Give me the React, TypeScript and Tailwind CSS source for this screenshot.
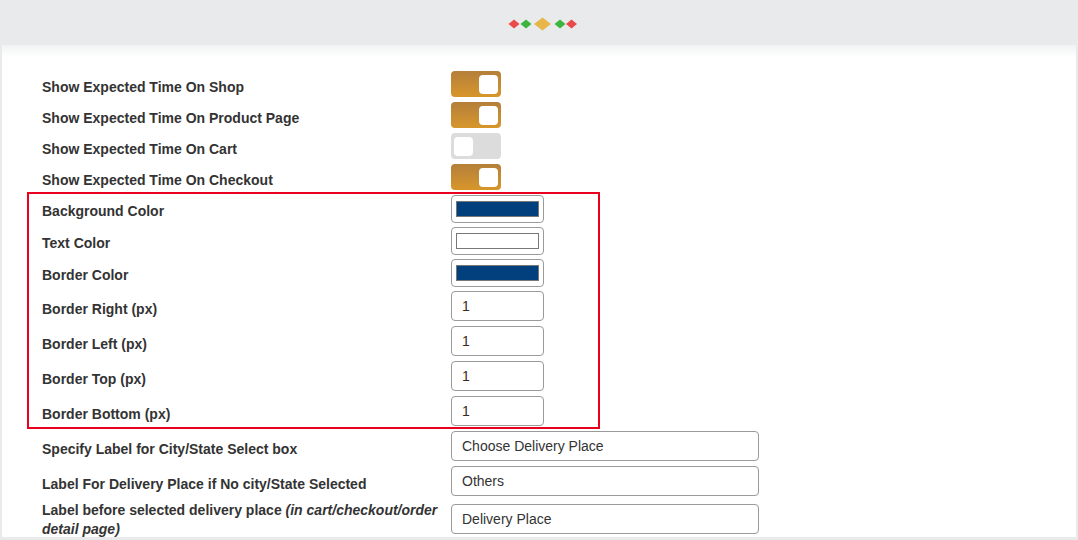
import React from "react";

const font = { fontFamily: '"Liberation Sans", Arial, sans-serif' };

function Star({ cx, cy, rx, ry, color }: { cx: number; cy: number; rx: number; ry: number; color: string }) {
  const k = 0.5;
  const d = `M ${cx} ${cy - ry} Q ${cx + rx * k} ${cy - ry * k} ${cx + rx} ${cy} Q ${cx + rx * k} ${cy + ry * k} ${cx} ${cy + ry} Q ${cx - rx * k} ${cy + ry * k} ${cx - rx} ${cy} Q ${cx - rx * k} ${cy - ry * k} ${cx} ${cy - ry} Z`;
  return <path d={d} fill={color} />;
}

function Toggle({ on }: { on: boolean }) {
  return (
    <div
      className={`w-[50px] h-[26px] rounded-[4px] flex items-center px-[3px] ${
        on ? "justify-end bg-gradient-to-b from-[#b47f3a] to-[#d8962a]" : "justify-start bg-[#dcdcdc]"
      }`}
    >
      <div className="w-[19px] h-[19px] bg-white rounded-[4px]" />
    </div>
  );
}

function ColorInput({ color }: { color: string }) {
  return (
    <div className="w-[93px] h-[28px] border border-[#9a9a9a] rounded-[4px] bg-white flex items-center justify-center">
      <div className="w-[83px] h-[16px] border border-[#777]" style={{ backgroundColor: color }} />
    </div>
  );
}

function NumInput() {
  return (
    <div className="w-[93px] h-[30px] border border-[#9a9a9a] rounded-[4px] bg-white flex items-center pl-[10px] text-[14px] text-[#3a2a1a]">
      1
    </div>
  );
}

function TextInput({ value }: { value: string }) {
  return (
    <div className="w-[308px] h-[30px] border border-[#9a9a9a] rounded-[4px] bg-white flex items-center pl-[10px] text-[14px] text-[#333]">
      {value}
    </div>
  );
}

function Row({ label, children, className = "", shift = "" }: { label: React.ReactNode; children: React.ReactNode; className?: string; shift?: string }) {
  return (
    <div className={`flex items-center ${className}`}>
      <div className={`w-[409px] text-[14px] font-bold text-[#333] leading-[19px] pr-[8px] relative ${shift}`}>{label}</div>
      {children}
    </div>
  );
}

export default function App() {
  return (
    <div className="w-[1078px] h-[540px] bg-[#e9eaec] overflow-hidden" style={font}>
      <div className="h-[45px] flex items-center justify-center">
        <svg width="72" height="16" viewBox="0 0 72 16" className="ml-[10px] mt-[3px]">
          <Star cx={6} cy={8} rx={5.5} ry={4.5} color="#ec4a4a" />
          <Star cx={18} cy={8} rx={5.5} ry={4.5} color="#3db43d" />
          <Star cx={34.5} cy={8} rx={8.5} ry={6.5} color="#e8b54a" />
          <Star cx={52} cy={8} rx={5.5} ry={4.5} color="#3db43d" />
          <Star cx={63.5} cy={8} rx={5.5} ry={4.5} color="#ec4a4a" />
        </svg>
      </div>
      <div className="mx-[2px] h-[492px] bg-white relative">
        <div className="absolute top-0 left-0 right-0 h-[12px] bg-gradient-to-b from-[#f1f2f3] to-white" />
        <div className="relative pt-[26px] pl-[40px] flex flex-col">
          <Row label="Show Expected Time On Shop" shift="top-[3px]"><Toggle on /></Row>
          <Row label="Show Expected Time On Product Page" shift="top-[3px]" className="mt-[5px]"><Toggle on /></Row>
          <Row label="Show Expected Time On Cart" shift="top-[3px]" className="mt-[5px]"><Toggle on={false} /></Row>
          <Row label="Show Expected Time On Checkout" shift="top-[3px]" className="mt-[5px]"><Toggle on /></Row>
          <div className="ml-[-15px] w-[573px] mt-[2px] border-2 border-[#e8001c] pl-[13px] pt-[1px] pb-[1px] flex flex-col">
            <Row label="Background Color" shift="top-[2px]"><ColorInput color="#023f7d" /></Row>
            <Row label="Text Color" shift="top-[2px]" className="mt-[4px]"><ColorInput color="#ffffff" /></Row>
            <Row label="Border Color" shift="top-[2px]" className="mt-[4px]"><ColorInput color="#023f7d" /></Row>
            <Row label="Border Right (px)" shift="top-[3px]" className="mt-[4px]"><NumInput /></Row>
            <Row label="Border Left (px)" shift="top-[3px]" className="mt-[5px]"><NumInput /></Row>
            <Row label="Border Top (px)" shift="top-[3px]" className="mt-[5px]"><NumInput /></Row>
            <Row label="Border Bottom (px)" shift="top-[3px]" className="mt-[5px]"><NumInput /></Row>
          </div>
          <Row label="Specify Label for City/State Select box" shift="top-[3px]" className="mt-[2px]"><TextInput value="Choose Delivery Place" /></Row>
          <Row label="Label For Delivery Place if No city/State Selected" shift="top-[3px]" className="mt-[5px]"><TextInput value="Others" /></Row>
          <Row
            label={
              <span>
                Label before selected delivery place <i>(in cart/checkout/order detail page)</i>
              </span>
            }
            shift="top-[1px]"
            className="mt-[4px]"
          >
            <TextInput value="Delivery Place" />
          </Row>
        </div>
      </div>
    </div>
  );
}
